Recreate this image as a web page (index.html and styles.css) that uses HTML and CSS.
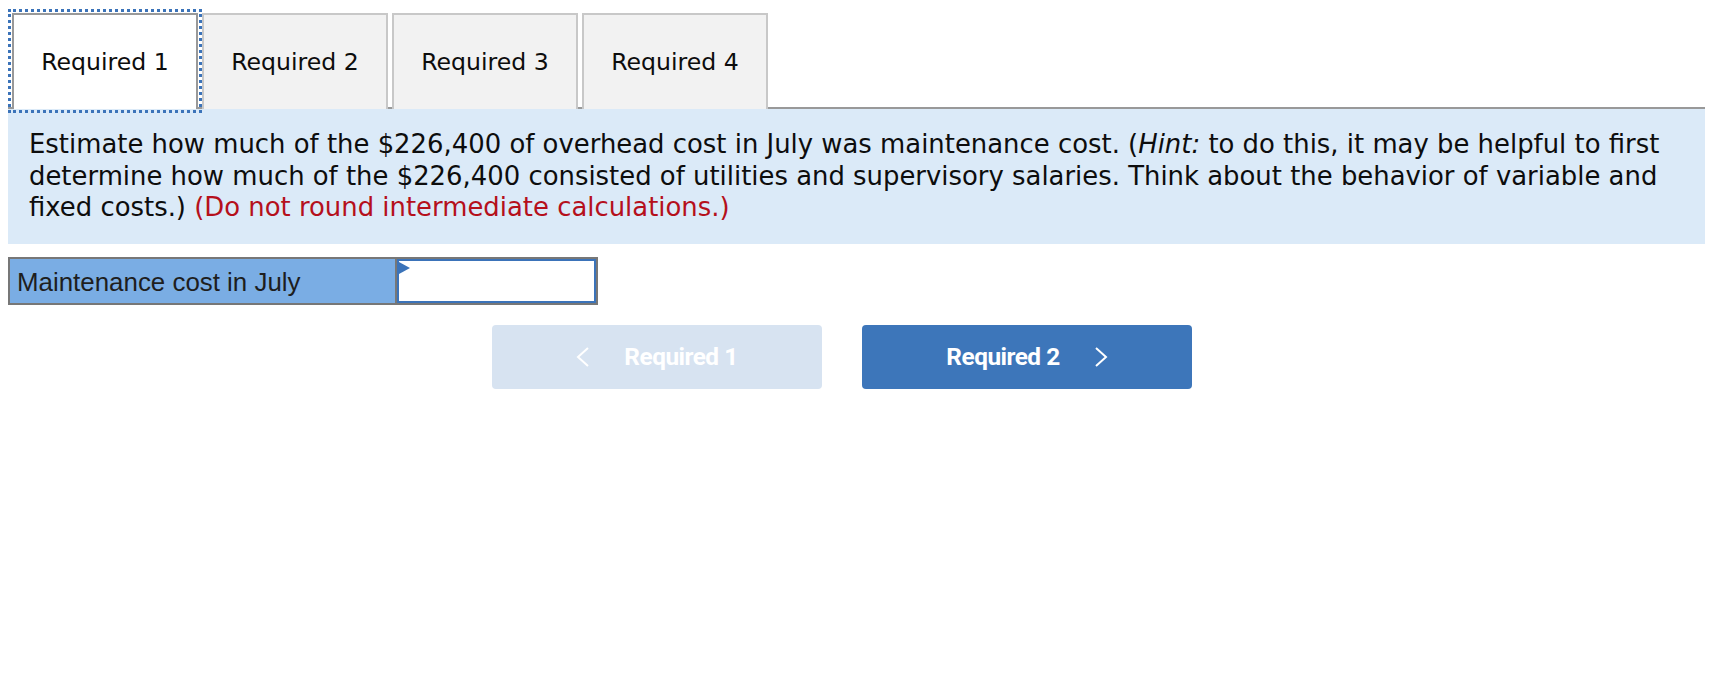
FILE: index.html
```html
<!DOCTYPE html>
<html lang="en">
<head>
<meta charset="utf-8">
<title>Required 1</title>
<link rel="stylesheet" href="styles.css">
</head>
<body>
<div class="tabs">
  <div class="tab tab-active">Required 1</div>
  <div class="tab">Required 2</div>
  <div class="tab">Required 3</div>
  <div class="tab">Required 4</div>
</div>
<div class="panel">
  <p class="question">Estimate how much of the $226,400 of overhead cost in July was maintenance cost. (<em>Hint:</em> to do this, it may be helpful to first determine how much of the $226,400 consisted of utilities and supervisory salaries. Think about the behavior of variable and fixed costs.) <span class="note">(Do not round intermediate calculations.)</span></p>
</div>
<div class="answer-row">
  <div class="answer-label">Maintenance cost in July</div>
  <div class="answer-input"><span class="marker"></span></div>
</div>
<div class="nav">
  <div class="nav-btn nav-prev">
    <svg class="chev" width="14" height="20" viewBox="0 0 14 20"><path d="M12 1 L2 10 L12 19" fill="none" stroke="#fff" stroke-width="2"/></svg>
    <span>Required 1</span>
  </div>
  <div class="nav-btn nav-next">
    <span>Required 2</span>
    <svg class="chev" width="14" height="20" viewBox="0 0 14 20"><path d="M2 1 L12 10 L2 19" fill="none" stroke="#fff" stroke-width="2"/></svg>
  </div>
</div>
</body>
</html>
```
FILE: styles.css
```css
body {
  margin: 8px;
  background: #fff;
  font-family: "DejaVu Sans", Verdana, sans-serif;
  color: #111;
}
.tabs {
  display: flex;
  gap: 4px;
  padding: 5px 0 0 4px;
  border-bottom: 2px solid #999;
  height: 94px;
}
.tab {
  width: 186px;
  box-sizing: border-box;
  height: 96px;
  border: 2px solid #c8c8c8;
  border-bottom: none;
  background: #f2f2f2;
  display: flex;
  align-items: center;
  justify-content: center;
  font-size: 23.6px;
  color: #0d0d0d;
}
.tab-active {
  background: #fff;
  border-color: #999;
  position: relative;
  z-index: 1;
  outline: 3px dotted #3b73b9;
  outline-offset: 1px;
}
.panel {
  background: #dbeaf8;
  padding: 20px 20px 20px 21px;
  position: relative;
}
.question {
  margin: 0;
  font-size: 25.9px;
  line-height: 31.5px;
  color: #0d0d0d;
}
.note {
  color: #b5101c;
}
.answer-row {
  margin-top: 13px;
  width: 590px;
  height: 48px;
  box-sizing: border-box;
  border: 2px solid #777;
  display: flex;
}
.answer-label {
  width: 387px;
  border-right: 2px solid #777;
  background: #7aade4;
  font-family: "Liberation Sans", Arial, sans-serif;
  font-size: 25.9px;
  color: #1e1e1e;
  padding-left: 7px;
  display: flex;
  align-items: center;
  padding-top: 3px;
  box-sizing: border-box;
  white-space: nowrap;
}
.answer-input {
  flex: 1;
  border: 2px solid #3b73b9;
  background: #fff;
  position: relative;
}
.marker {
  position: absolute;
  left: 0;
  top: 1px;
  width: 0;
  height: 0;
  border-top: 6px solid transparent;
  border-bottom: 6px solid transparent;
  border-left: 11px solid #3b73b9;
}
.nav {
  margin: 20px 0 0 484px;
  display: flex;
  gap: 40px;
}
.nav-btn {
  width: 330px;
  height: 64px;
  border-radius: 4px;
  display: flex;
  align-items: center;
  justify-content: center;
  gap: 34px;
  font-family: Roboto, "Liberation Sans", sans-serif;
  font-weight: 700;
  font-size: 24.4px;
  letter-spacing: -0.5px;
  color: #fff;
}
.nav-prev {
  background: #d7e3f1;
}
.nav-next {
  background: #3d76ba;
}
.chev {
  display: block;
}
```
